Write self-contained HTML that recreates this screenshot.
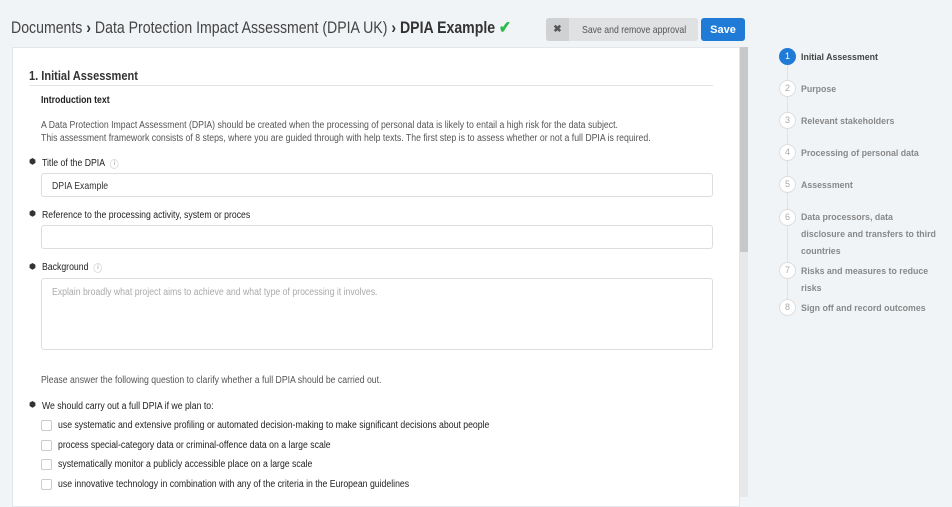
<!DOCTYPE html>
<html><head><meta charset="utf-8"><style>
*{box-sizing:border-box;margin:0;padding:0}
body{width:952px;height:492px;overflow:hidden;background:#f1f4f7;font-family:"Liberation Sans",sans-serif;color:#333;position:relative}
.a{position:absolute;white-space:nowrap}
.n{transform:scaleX(.87);transform-origin:0 0}
.crumb{left:11px;top:18px;font-size:17px;color:#444;transform:scaleX(.83);transform-origin:0 0}
.crumb b{color:#333}
.btn1{left:546px;top:18px;width:152px;height:23px;background:#dfe1e3;border-radius:3px;font-size:10.5px;color:#555}
.btn1 .x{position:absolute;left:0;top:0;width:23px;height:23px;background:#cfd1d3;border-radius:3px 0 0 3px;text-align:center;line-height:23px;font-weight:bold;font-size:10px}
.btn1 span{position:absolute;left:36px;top:6px;transform:scaleX(.83);transform-origin:0 0}
.btn2{left:701px;top:18px;width:44px;height:23px;background:#1f7bd6;border-radius:3px;color:#fff;font-weight:bold;font-size:11px;text-align:center;line-height:24px}
.panel{left:12px;top:47px;width:728px;height:460px;background:#fff;border:1px solid #e3e6ea}
.sb{left:740px;top:47px;width:8px;height:450px;background:#e8e8e8}
.sb i{position:absolute;left:0;top:0;width:8px;height:205px;background:#c8c8c8}
h1{position:absolute;left:29px;top:68px;font-size:13px;font-weight:bold;color:#333;transform:scaleX(.85);transform-origin:0 0}
.hr{left:29px;top:85px;width:684px;height:1px;background:#e3e3e3}
.t{font-size:10px;color:#555}
.lab{font-size:10px;color:#222}
.in{position:absolute;left:41px;width:672px;background:#fff;border:1px solid #ddd;border-radius:3px;font-size:10px}
.in span{display:inline-block;transform:scaleX(.87);transform-origin:0 0}
.ic{font-size:8px;color:#333}
.info{display:inline-block;width:10px;height:10px;border:1px solid #ddd;border-radius:50%;font-size:6px;text-align:center;line-height:8px;color:#777;margin-left:6px;vertical-align:1px}
.cb{left:41px;width:11px;height:11px;border:1px solid #ccc;border-radius:2px;background:#fff}
.st{left:779px;width:17px;height:17px;border-radius:50%;border:1px solid #ddd;background:#fff;color:#aaa;font-size:9px;text-align:center;line-height:15px}
.sl{left:801px;font-size:8.8px;font-weight:bold;color:#888;line-height:17px}
.line{left:787px;width:1px;background:#e2e2e2}
</style></head><body>
<div class="a crumb">Documents <b>›</b> Data Protection Impact Assessment (DPIA UK) <b>›</b> <b>DPIA Example</b> <span style="color:#2dbb4d;font-weight:bold">✔</span></div>
<div class="a btn1"><div class="x">✖</div><span>Save and remove approval</span></div>
<div class="a btn2">Save</div>
<div class="a panel"></div>
<div class="a sb"><i></i></div>
<h1>1. Initial Assessment</h1>
<div class="a hr"></div>
<div class="a lab n" style="left:41px;top:95px;font-weight:bold">Introduction text</div>
<div class="a t n" style="left:41px;top:120px">A Data Protection Impact Assessment (DPIA) should be created when the processing of personal data is likely to entail a high risk for the data subject.</div>
<div class="a t n" style="left:41px;top:133px">This assessment framework consists of 8 steps, where you are guided through with help texts. The first step is to assess whether or not a full DPIA is required.</div>
<div class="a ic" style="left:29px;top:157px">⬢</div>
<div class="a lab n" style="left:42px;top:158px">Title of the DPIA<span class="info">i</span></div>
<div class="in" style="top:173px;height:24px;padding:7px 10px;color:#333"><span>DPIA Example</span></div>
<div class="a ic" style="left:29px;top:209px">⬢</div>
<div class="a lab n" style="left:42px;top:210px">Reference to the processing activity, system or proces</div>
<div class="in" style="top:225px;height:24px"></div>
<div class="a ic" style="left:29px;top:262px">⬢</div>
<div class="a lab n" style="left:42px;top:262px">Background<span class="info">i</span></div>
<div class="in" style="top:278px;height:72px;padding:8px 10px;color:#aaa"><span>Explain broadly what project aims to achieve and what type of processing it involves.</span></div>
<div class="a t n" style="left:41px;top:375px">Please answer the following question to clarify whether a full DPIA should be carried out.</div>
<div class="a ic" style="left:29px;top:400px">⬢</div>
<div class="a lab n" style="left:42px;top:401px">We should carry out a full DPIA if we plan to:</div>
<div class="a cb" style="top:420px"></div><div class="a lab n" style="left:58px;top:420px">use systematic and extensive profiling or automated decision-making to make significant decisions about people</div>
<div class="a cb" style="top:440px"></div><div class="a lab n" style="left:58px;top:440px">process special-category data or criminal-offence data on a large scale</div>
<div class="a cb" style="top:459px"></div><div class="a lab n" style="left:58px;top:459px">systematically monitor a publicly accessible place on a large scale</div>
<div class="a cb" style="top:479px"></div><div class="a lab n" style="left:58px;top:479px">use innovative technology in combination with any of the criteria in the European guidelines</div>

<div class="a line" style="top:60px;height:250px"></div>
<div class="a st" style="top:48px;background:#1f7bd6;border-color:#1f7bd6;color:#fff">1</div><div class="a sl" style="top:49px;color:#444">Initial Assessment</div>
<div class="a st" style="top:80px">2</div><div class="a sl" style="top:81px">Purpose</div>
<div class="a st" style="top:112px">3</div><div class="a sl" style="top:113px">Relevant stakeholders</div>
<div class="a st" style="top:144px">4</div><div class="a sl" style="top:145px">Processing of personal data</div>
<div class="a st" style="top:176px">5</div><div class="a sl" style="top:177px">Assessment</div>
<div class="a st" style="top:209px">6</div><div class="a sl" style="top:209px;white-space:normal;width:135px">Data processors, data disclosure and transfers to third countries</div>
<div class="a st" style="top:262px">7</div><div class="a sl" style="top:263px;white-space:normal;width:130px">Risks and measures to reduce risks</div>
<div class="a st" style="top:299px">8</div><div class="a sl" style="top:300px">Sign off and record outcomes</div>
</body></html>
